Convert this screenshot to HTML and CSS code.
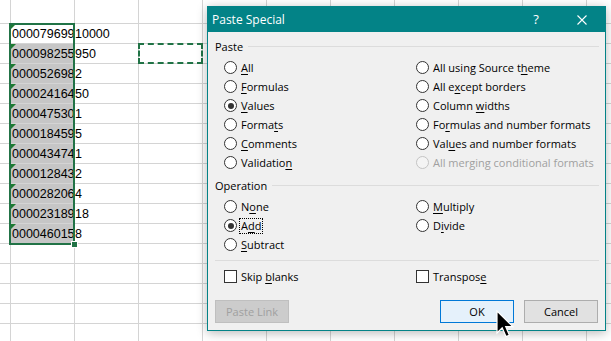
FILE: index.html
```html
<!DOCTYPE html>
<html>
<head>
<meta charset="utf-8">
<link rel="stylesheet" href="styles.css">
</head>
<body>
<div class="sheet">
  <div class="top"></div>
  <div class="grid">
    <div class="row"><div class="pad"></div><div class="cell a err">000079699000</div><div class="cell b">10000</div></div>
    <div class="row"><div class="pad"></div><div class="cell a err sel">000098255900</div><div class="cell b">950</div></div>
    <div class="row"><div class="pad"></div><div class="cell a err sel">000052698200</div><div class="cell b">2</div></div>
    <div class="row"><div class="pad"></div><div class="cell a err sel">000024164500</div><div class="cell b">50</div></div>
    <div class="row"><div class="pad"></div><div class="cell a err sel">000047530100</div><div class="cell b">1</div></div>
    <div class="row"><div class="pad"></div><div class="cell a err sel">000018459500</div><div class="cell b">5</div></div>
    <div class="row"><div class="pad"></div><div class="cell a err sel">000043474100</div><div class="cell b">1</div></div>
    <div class="row"><div class="pad"></div><div class="cell a err sel">000012843200</div><div class="cell b">2</div></div>
    <div class="row"><div class="pad"></div><div class="cell a err sel">000028206400</div><div class="cell b">4</div></div>
    <div class="row"><div class="pad"></div><div class="cell a err sel">000023189100</div><div class="cell b">18</div></div>
    <div class="row"><div class="pad"></div><div class="cell a err sel">000046015800</div><div class="cell b">8</div></div>
  </div>

  <div class="selection"></div>
  <div class="handle"></div>
  <div class="marquee"></div>

  <div class="dialog">
    <div class="titlebar">
      <span class="title">Paste Special</span>
      <span class="tbtn help">?</span>
      <span class="tbtn close"><svg width="10" height="10" viewBox="0 0 10 10"><path d="M0.5 0.5 L9.5 9.5 M9.5 0.5 L0.5 9.5" stroke="#fff" stroke-width="1.1" fill="none"/></svg></span>
    </div>
    <div class="body">
      <div class="ghead"><span>Paste</span><i class="hline"></i></div>
      <div class="opts">
        <div class="opt"><span class="radio"></span><span><u>A</u>ll</span></div>
        <div class="opt"><span class="radio"></span><span>All using Source t<u>h</u>eme</span></div>
        <div class="opt"><span class="radio"></span><span><u>F</u>ormulas</span></div>
        <div class="opt"><span class="radio"></span><span>All e<u>x</u>cept borders</span></div>
        <div class="opt"><span class="radio on"></span><span><u>V</u>alues</span></div>
        <div class="opt"><span class="radio"></span><span>Column <u>w</u>idths</span></div>
        <div class="opt"><span class="radio"></span><span>Forma<u>t</u>s</span></div>
        <div class="opt"><span class="radio"></span><span>Fo<u>r</u>mulas and number formats</span></div>
        <div class="opt"><span class="radio"></span><span><u>C</u>omments</span></div>
        <div class="opt"><span class="radio"></span><span>Val<u>u</u>es and number formats</span></div>
        <div class="opt"><span class="radio"></span><span>Validatio<u>n</u></span></div>
        <div class="opt disabled"><span class="radio"></span><span>All merging conditional formats</span></div>
      </div>
      <div class="ghead op"><span>Operation</span><i class="hline"></i></div>
      <div class="opts">
        <div class="opt"><span class="radio"></span><span>N<u>o</u>ne</span></div>
        <div class="opt"><span class="radio"></span><span><u>M</u>ultiply</span></div>
        <div class="opt"><span class="radio on"></span><span class="focus">A<u>d</u>d</span></div>
        <div class="opt"><span class="radio"></span><span>D<u>i</u>vide</span></div>
        <div class="opt"><span class="radio"></span><span><u>S</u>ubtract</span></div>
        <div></div>
      </div>
      <div class="sep"></div>
      <div class="opts checks">
        <div class="opt"><span class="check"></span><span>Skip <u>b</u>lanks</span></div>
        <div class="opt"><span class="check"></span><span>Transpos<u>e</u></span></div>
      </div>
      <div class="buttons">
        <span class="btn disabled">Paste Link</span>
        <span class="spacer"></span>
        <span class="btn default">OK</span>
        <span class="btn">Cancel</span>
      </div>
    </div>
  </div>

  <svg class="cursor" width="20" height="32" viewBox="0 0 20 32">
    <path d="M1 1 L1 23 L6.2 17.8 L10 26.6 L13.4 25.2 L9.7 16.6 L16.8 16.6 Z" fill="#000" stroke="#fff" stroke-width="1.2" stroke-linejoin="miter"/>
  </svg>
</div>
</body>
</html>
```

FILE: styles.css
```css
html, body {
  margin: 0;
  padding: 0;
  background: #fff;
}

.sheet {
  position: relative;
  width: 611px;
  height: 341px;
  overflow: hidden;
  background-color: #fff;
  background-image: linear-gradient(to right, #d4d4d4 1px, transparent 1px);
  background-size: 64px 100%;
  background-position: 10px 0;
  font-family: "Liberation Sans", Arial, sans-serif;
  font-size: 12.5px;
  color: #000;
}

.top {
  height: 23px;
}

.grid {
  height: 318px;
  background-image:
    linear-gradient(to right, #d4d4d4 1px, transparent 1px),
    linear-gradient(to bottom, #d4d4d4 1px, transparent 1px);
  background-size: 64px 20px, 64px 20px;
  background-position: 10px 0, 0 0;
}

.row {
  display: flex;
  height: 20px;
}

.pad {
  width: 10px;
  flex: none;
}

.cell {
  position: relative;
  width: 64px;
  flex: none;
  height: 20px;
  line-height: 20px;
  padding: 1px 0 0 2px;
  box-sizing: border-box;
  overflow: hidden;
  white-space: nowrap;
}

.cell.b {
  padding-left: 1px;
}

.cell.a.sel {
  background: linear-gradient(#c6c6c6, #c6c6c6) no-repeat 1px 1px / 62px 19px;
}

.cell.err::before {
  content: "";
  position: absolute;
  left: 1px;
  top: 1px;
  width: 0;
  height: 0;
  border-top: 5px solid #1d7a32;
  border-right: 5px solid transparent;
}

.selection {
  position: absolute;
  left: 9px;
  top: 23px;
  width: 66px;
  height: 222px;
  box-sizing: border-box;
  border: 2px solid #217346;
}

.handle {
  position: absolute;
  left: 71px;
  top: 241px;
  width: 5px;
  height: 5px;
  background: #217346;
  border: 1px solid #fff;
}

.marquee {
  position: absolute;
  left: 138px;
  top: 43px;
  width: 65px;
  height: 21px;
  box-sizing: border-box;
  border: 2px dashed #217346;
}

.dialog {
  position: absolute;
  left: 207px;
  top: 6px;
  width: 399px;
  height: 325px;
  box-sizing: border-box;
  border: 1px solid #038387;
  background: #f0f0f0;
  box-shadow: 0 2px 10px rgba(0, 0, 0, 0.28);
  font-family: "Open Sans", "Noto Sans", sans-serif;
  font-size: 11px;
  color: #000;
  display: flex;
  flex-direction: column;
}

.titlebar {
  height: 25px;
  background: #038387;
  color: #fff;
  display: flex;
  align-items: center;
  flex: none;
}

.title {
  flex: 1;
  padding-left: 4px;
  font-size: 12px;
  padding-bottom: 1px;
}

.tbtn {
  width: 46px;
  height: 25px;
  display: flex;
  align-items: center;
  justify-content: center;
}

.help {
  font-size: 13px;
  padding-bottom: 1px;
  box-sizing: border-box;
}

.body {
  padding: 0 6px 0 7px;
  display: flex;
  flex-direction: column;
}

.ghead {
  display: flex;
  align-items: center;
  height: 16px;
  margin-top: 6px;
}

.ghead.op {
  margin-top: 5px;
}

.hline {
  flex: 1;
  height: 1px;
  background: #dcdcdc;
  margin-left: 5px;
}

.opts {
  display: grid;
  grid-template-columns: 192px 1fr;
  grid-auto-rows: 19px;
  padding-left: 9px;
  margin-top: 4px;
}

.opt {
  display: flex;
  align-items: center;
  gap: 4px;
  white-space: nowrap;
}

.opt u {
  text-decoration: underline;
  text-underline-offset: 2px;
}

.radio {
  width: 13px;
  height: 13px;
  box-sizing: border-box;
  border: 1px solid #333;
  border-radius: 50%;
  background: #fff;
  display: flex;
  align-items: center;
  justify-content: center;
  flex: none;
}

.radio.on::after {
  content: "";
  width: 6px;
  height: 6px;
  border-radius: 50%;
  background: #333;
}

.opt.disabled {
  color: #a0a0a0;
}

.opt.disabled .radio {
  border-color: #c4c4c4;
  background: #f4f4f4;
}

.focus {
  outline: 1px dotted #000;
  outline-offset: 0;
  padding: 0 1px;
  margin-left: -1px;
  line-height: 14px;
}

.check {
  width: 13px;
  height: 13px;
  box-sizing: border-box;
  border: 1px solid #333;
  background: #fff;
  flex: none;
}

.sep {
  height: 1px;
  background: #dcdcdc;
  margin-top: 6px;
}

.checks {
  margin-top: 6px;
}

.buttons {
  display: flex;
  gap: 10px;
  margin-top: 14px;
  padding-right: 1px;
}

.spacer {
  flex: 1;
}

.btn {
  width: 74px;
  height: 23px;
  box-sizing: border-box;
  border: 1px solid #adadad;
  background: #e1e1e1;
  display: flex;
  align-items: center;
  justify-content: center;
}

.btn.default {
  border-color: #0078d7;
  background: #e5f1fb;
}

.btn.disabled {
  border-color: #bfbfbf;
  background: #cccccc;
  color: #a0a0a0;
}

.cursor {
  position: absolute;
  left: 496px;
  top: 310px;
}
```
